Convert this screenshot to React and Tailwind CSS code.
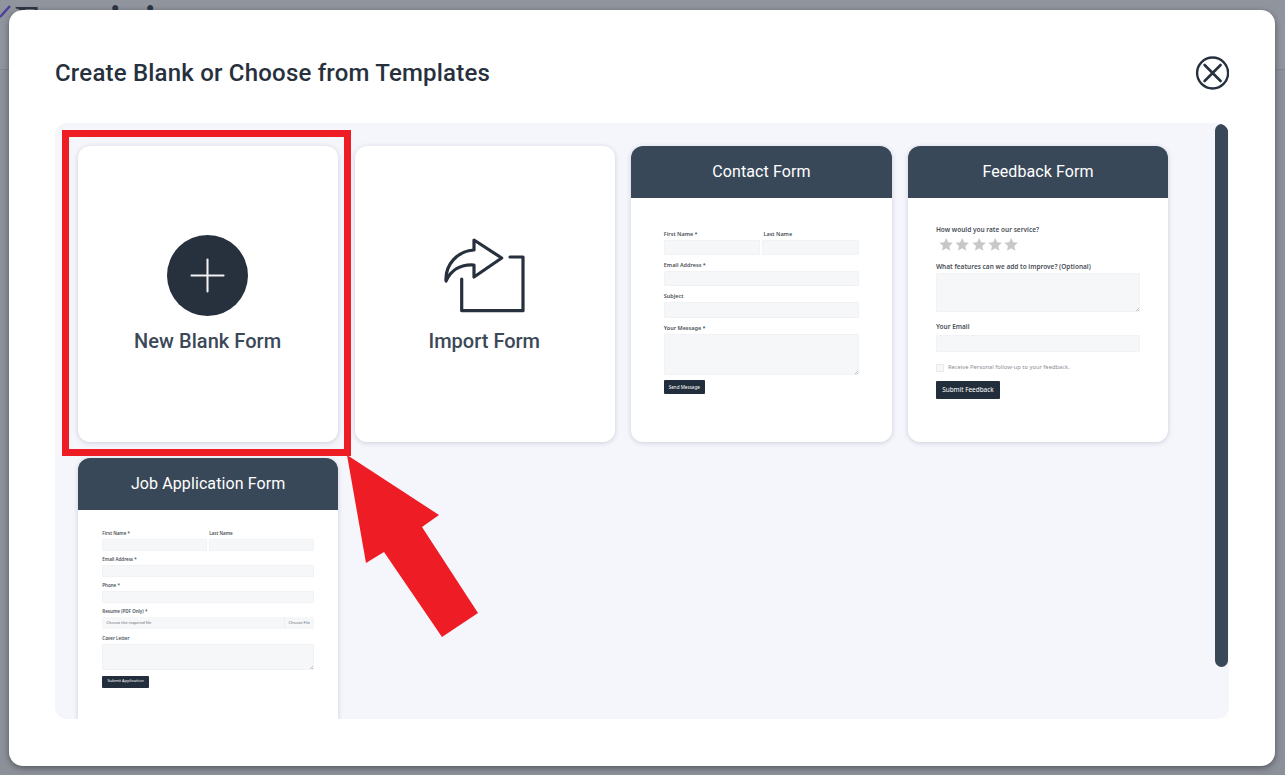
import { Plus } from 'lucide-react';

const font = { roboto: "font-['Roboto',sans-serif]" };

function Label({ children, className = '' }) {
  return <p className={"font-['Noto_Sans',sans-serif] font-semibold text-[#4a4f57] whitespace-nowrap " + className}>{children}</p>;
}

function Field({ className = '' }) {
  return <div className={'bg-[#f6f7f9] rounded-[1px] border border-[#f1f2f5] ' + className}></div>;
}

function Textarea({ className = '' }) {
  return (
    <div className={'relative bg-[#f6f7f9] rounded-[1px] border border-[#f1f2f5] ' + className}>
      <svg className="absolute right-0 bottom-0" width="4" height="4" viewBox="0 0 4 4">
        <path d="M1 4L4 1M3 4L4 3" stroke="#9a9a9a" strokeWidth="0.6" />
      </svg>
    </div>
  );
}

function SubmitBtn({ children, className = '' }) {
  return (
    <div className={"flex items-center justify-center bg-[#222e3c] rounded-[1px] text-white font-['Noto_Sans',sans-serif] whitespace-nowrap " + className}>
      {children}
    </div>
  );
}

function TemplateCard({ title, children }) {
  return (
    <div className="h-[295.5px] bg-white rounded-[12px] shadow-[0_1px_5px_rgba(40,50,80,0.2)] overflow-hidden">
      <div className={'h-[52px] bg-[#394858] flex items-center justify-center text-white text-[16px] tracking-[0.1px] ' + font.roboto}>{title}</div>
      {children}
    </div>
  );
}

function ContactPreview() {
  const label = 'text-[5.5px] leading-[6px] mb-[3px]';
  return (
    <div className="pt-[33px] px-[32.5px] flex flex-col">
      <div className="flex gap-[2px]">
        <div className="flex-1"><Label className={label}>First Name *</Label><Field className="h-[15px]" /></div>
        <div className="flex-1"><Label className={label + ' pl-[1px]'}>Last Name</Label><Field className="h-[15px]" /></div>
      </div>
      <Label className={label + ' mt-[7px]'}>Email Address *</Label>
      <Field className="h-[15px]" />
      <Label className={label + ' mt-[7px]'}>Subject</Label>
      <Field className="h-[16px]" />
      <Label className={label + ' mt-[7px]'}>Your Message *</Label>
      <Textarea className="h-[41px]" />
      <SubmitBtn className="w-[41px] h-[14px] mt-[5px] text-[4.6px]">Send Message</SubmitBtn>
    </div>
  );
}

function Star() {
  return (
    <svg width="16.3" height="15" viewBox="0 0 24 24" fill="#c8c8c8">
      <path d="M12 1.5l3.2 7 7.6.8-5.7 5.1 1.6 7.5L12 18.1l-6.7 3.8 1.6-7.5L1.2 9.3l7.6-.8z" />
    </svg>
  );
}

function FeedbackPreview() {
  return (
    <div className="pt-[28px] px-[28px] flex flex-col">
      <Label className="text-[6.5px] leading-[7px]">How would you rate our service?</Label>
      <div className="flex ml-[2px] mt-[4px]">
        <Star /><Star /><Star /><Star /><Star />
      </div>
      <Label className="text-[6.5px] leading-[7px] mt-[10.5px] mb-[3.5px]">What features can we add to improve? (Optional)</Label>
      <Textarea className="h-[39px]" />
      <Label className="text-[6.5px] leading-[7px] mt-[11px] mb-[5px]">Your Email</Label>
      <Field className="h-[17px]" />
      <div className="flex items-center gap-[4px] mt-[12px] h-[8px]">
        <div className="w-[8px] h-[8px] bg-[#f6f7f9] border border-[#e9ebef]"></div>
        <p className="font-['Noto_Sans',sans-serif] text-[5.8px] leading-none text-[#8b8f96] whitespace-nowrap">Receive Personal follow-up to your feedback.</p>
      </div>
      <SubmitBtn className="w-[64px] h-[18px] mt-[9px] text-[6.4px]">Submit Feedback</SubmitBtn>
    </div>
  );
}

function JobPreview() {
  const label = 'text-[4.5px] leading-[5px] mb-[3px]';
  return (
    <div className="pt-[21px] px-[24.3px] flex flex-col">
      <div className="flex gap-[2px]">
        <div className="flex-1"><Label className={label}>First Name *</Label><Field className="h-[12px]" /></div>
        <div className="flex-1"><Label className={label}>Last Name</Label><Field className="h-[12px]" /></div>
      </div>
      <Label className={label + ' mt-[6px]'}>Email Address *</Label>
      <Field className="h-[12px]" />
      <Label className={label + ' mt-[6px]'}>Phone *</Label>
      <Field className="h-[12px]" />
      <Label className={label + ' mt-[6px]'}>Resume (PDF Only) *</Label>
      <div className="h-[12px] flex items-center bg-[#f6f7f9] rounded-[1px] font-['Noto_Sans',sans-serif] text-[4px] text-[#666b73]">
        <span className="flex-1 pl-[4px]">Choose the required file</span>
        <span className="w-[30.5px] h-full border-l border-[#eceef1] flex items-center justify-center">Choose File</span>
      </div>
      <Label className={label + ' mt-[7px]'}>Cover Letter</Label>
      <Textarea className="h-[26px]" />
      <SubmitBtn className="w-[46.5px] h-[12px] mt-[5.5px] text-[4.1px]">Submit Application</SubmitBtn>
    </div>
  );
}

function ImportIcon() {
  return (
    <svg width="83" height="77" viewBox="0 0 83 77" fill="none" stroke="#27313e" strokeWidth="3.2" strokeLinecap="round" strokeLinejoin="round">
      <path d="M18.7 42V73.7H80V20H67" />
      <path d="M31 3L58.7 21L31 40V28C18 27 8 33 3 44C2 28 14 14 31 13V3Z" />
    </svg>
  );
}

export default function App() {
  return (
    <div className="relative w-full h-[775px] overflow-hidden bg-[#8c9099]">
      {/* pagina detras del modal */}
      <div className="relative h-[70px] bg-[#90949c] border-b border-[#81858e] font-['Liberation_Serif',serif] font-bold text-[40px] leading-[40px] text-[#2c3646] flex">
        <svg className="absolute left-0 top-[4px]" width="14" height="16" viewBox="0 0 14 16">
          <path d="M0 13L10 2" stroke="#4a3f9f" strokeWidth="2.5" />
        </svg>
        <span className="ml-[15px]">F</span>
        <span className="ml-[70px]">i</span>
        <span className="ml-[24px]">i</span>
      </div>

      <div className="absolute left-[9px] top-[10px] w-[1266px] h-[756px] bg-white rounded-[14px] shadow-[0_2px_6px_rgba(0,0,0,0.4)] px-[46px] pt-[46px] flex flex-col">
        <div className="flex items-center justify-between h-[34px] mb-[33px]">
          <h2 className={'text-[24px] font-medium tracking-[0.2px] text-[#27313e] ' + font.roboto}>Create Blank or Choose from Templates</h2>
          <svg width="34" height="34" viewBox="0 0 34 34" fill="none" stroke="#27313e" strokeLinecap="round">
            <circle cx="17.6" cy="17" r="15.5" strokeWidth="2.4" />
            <path d="M9.6 9L25.6 25M25.6 9L9.6 25" strokeWidth="2.6" />
          </svg>
        </div>

        <div className="relative h-[596px] bg-[#f5f6fc] rounded-[12px] overflow-hidden flex">
          <div className="flex-1 pl-[23px] pt-[23px] grid grid-cols-[repeat(4,260.3px)] auto-rows-[295.5px] gap-x-[16.35px] gap-y-[16.5px] content-start">
            <div className="h-[295.5px] bg-white rounded-[12px] shadow-[0_1px_5px_rgba(40,50,80,0.2)] flex flex-col items-center pt-[89px] pr-[1px]">
              <div className="w-[81px] h-[81px] rounded-full bg-[#27313e] flex items-center justify-center">
                <Plus size={55} strokeWidth={0.9} color="#f2f2f2" />
              </div>
              <p className={'mt-[10px] text-[20px] font-medium tracking-[0.05px] text-[#3b4858] ' + font.roboto}>New Blank Form</p>
            </div>
            <div className="h-[295.5px] bg-white rounded-[12px] shadow-[0_1px_5px_rgba(40,50,80,0.2)] flex flex-col items-center pt-[91px] pr-[1px]">
              <ImportIcon />
              <p className={'mt-[12px] text-[20px] font-medium text-[#3b4858] ' + font.roboto}>Import Form</p>
            </div>
            <TemplateCard title="Contact Form"><ContactPreview /></TemplateCard>
            <TemplateCard title="Feedback Form"><FeedbackPreview /></TemplateCard>
            <TemplateCard title="Job Application Form"><JobPreview /></TemplateCard>
          </div>
          <div className="w-[13px] mr-[1px] mt-[1px] h-[543px] bg-[#394858] rounded-full"></div>
        </div>
      </div>

      {/* anotacion roja */}
      <div className="absolute left-[62px] top-[130px] w-[289px] h-[326px] border-[7px] border-[#ee1c25]"></div>
      <svg className="absolute left-0 top-0 pointer-events-none" width="1285" height="775" viewBox="0 0 1285 775">
        <polygon points="347,455 439,515 422,527 478,613 442,637 384,552 366,563" fill="#ee1c25" />
      </svg>
    </div>
  );
}
